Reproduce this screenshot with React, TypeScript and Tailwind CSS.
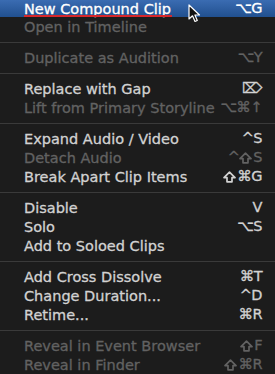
type Item = { label: string; keys?: string; off?: boolean };

const groups: Item[][] = [
  [
    { label: "New Compound Clip", keys: "⌥G" },
    { label: "Open in Timeline", off: true },
  ],
  [{ label: "Duplicate as Audition", keys: "⌥Y", off: true }],
  [
    { label: "Replace with Gap", keys: "⌦" },
    { label: "Lift from Primary Storyline", keys: "⌥⌘↑", off: true },
  ],
  [
    { label: "Expand Audio / Video", keys: "^S" },
    { label: "Detach Audio", keys: "^⇧S", off: true },
    { label: "Break Apart Clip Items", keys: "⇧⌘G" },
  ],
  [
    { label: "Disable", keys: "V" },
    { label: "Solo", keys: "⌥S" },
    { label: "Add to Soloed Clips" },
  ],
  [
    { label: "Add Cross Dissolve", keys: "⌘T" },
    { label: "Change Duration...", keys: "^D" },
    { label: "Retime...", keys: "⌘R" },
  ],
  [
    { label: "Reveal in Event Browser", keys: "⇧F", off: true },
    { label: "Reveal in Finder", keys: "⇧⌘R", off: true },
  ],
];

function Cursor() {
  return (
    <svg
      className="absolute left-[188px] top-[4px]"
      width="13"
      height="19"
      viewBox="0 0 13 19"
    >
      <path
        d="M1 1 L1 15 L4.5 11.8 L7 17.5 L9.3 16.5 L6.9 11 L11.5 11 Z"
        fill="#111"
        stroke="#fff"
        strokeWidth="1.2"
        strokeLinejoin="round"
      />
    </svg>
  );
}

function Shift() {
  return (
    <svg width="13" height="12" viewBox="0 0 13 12" className="mr-px">
      <path
        d="M6.5 1.2 L12 6.6 L9 6.6 L9 10.8 L4 10.8 L4 6.6 L1 6.6 Z"
        fill="none"
        stroke="currentColor"
        strokeWidth="1.7"
        strokeLinejoin="round"
      />
    </svg>
  );
}

function Keys({ keys }: { keys: string }) {
  return (
    <span className="flex items-center tracking-[-0.5px]">
      {Array.from(keys).map((ch, i) =>
        ch === "⇧" ? <Shift key={i} /> : <span key={i}>{ch}</span>
      )}
    </span>
  );
}

function Row({ item, active }: { item: Item; active?: boolean }) {
  const color = active ? "text-white" : item.off ? "text-[#626262]" : "text-[#d2d2d2]";
  return (
    <div
      className={`relative flex items-center justify-between pl-[24px] pr-[13px] [-webkit-text-stroke:0.3px] ${
        active ? "h-[17px] bg-gradient-to-b from-[#3a6cb2] to-[#21508f]" : "h-[19px]"
      } ${color}`}
    >
      <span className="pt-px">{item.label}</span>
      {item.keys && <Keys keys={item.keys} />}
      {active && (
        <>
          <div className="absolute left-[24px] top-[15px] h-[2px] w-[148px] bg-[#d8262a]" />
          <Cursor />
        </>
      )}
    </div>
  );
}

export default function App() {
  return (
    <div
      className="relative h-[374px] w-[275px] overflow-hidden bg-[#1c1c1c] text-[14.5px] leading-none"
      style={{ fontFamily: '"DejaVu Sans", sans-serif' }}
    >
      {groups.map((g, gi) => (
        <div key={gi}>
          {gi > 0 && (
            <div className="flex h-[12px] items-center">
              <div className="h-px w-full bg-[#3a3a3a]" />
            </div>
          )}
          {g.map((item, ii) => (
            <Row key={item.label} item={item} active={gi === 0 && ii === 0} />
          ))}
        </div>
      ))}
    </div>
  );
}
